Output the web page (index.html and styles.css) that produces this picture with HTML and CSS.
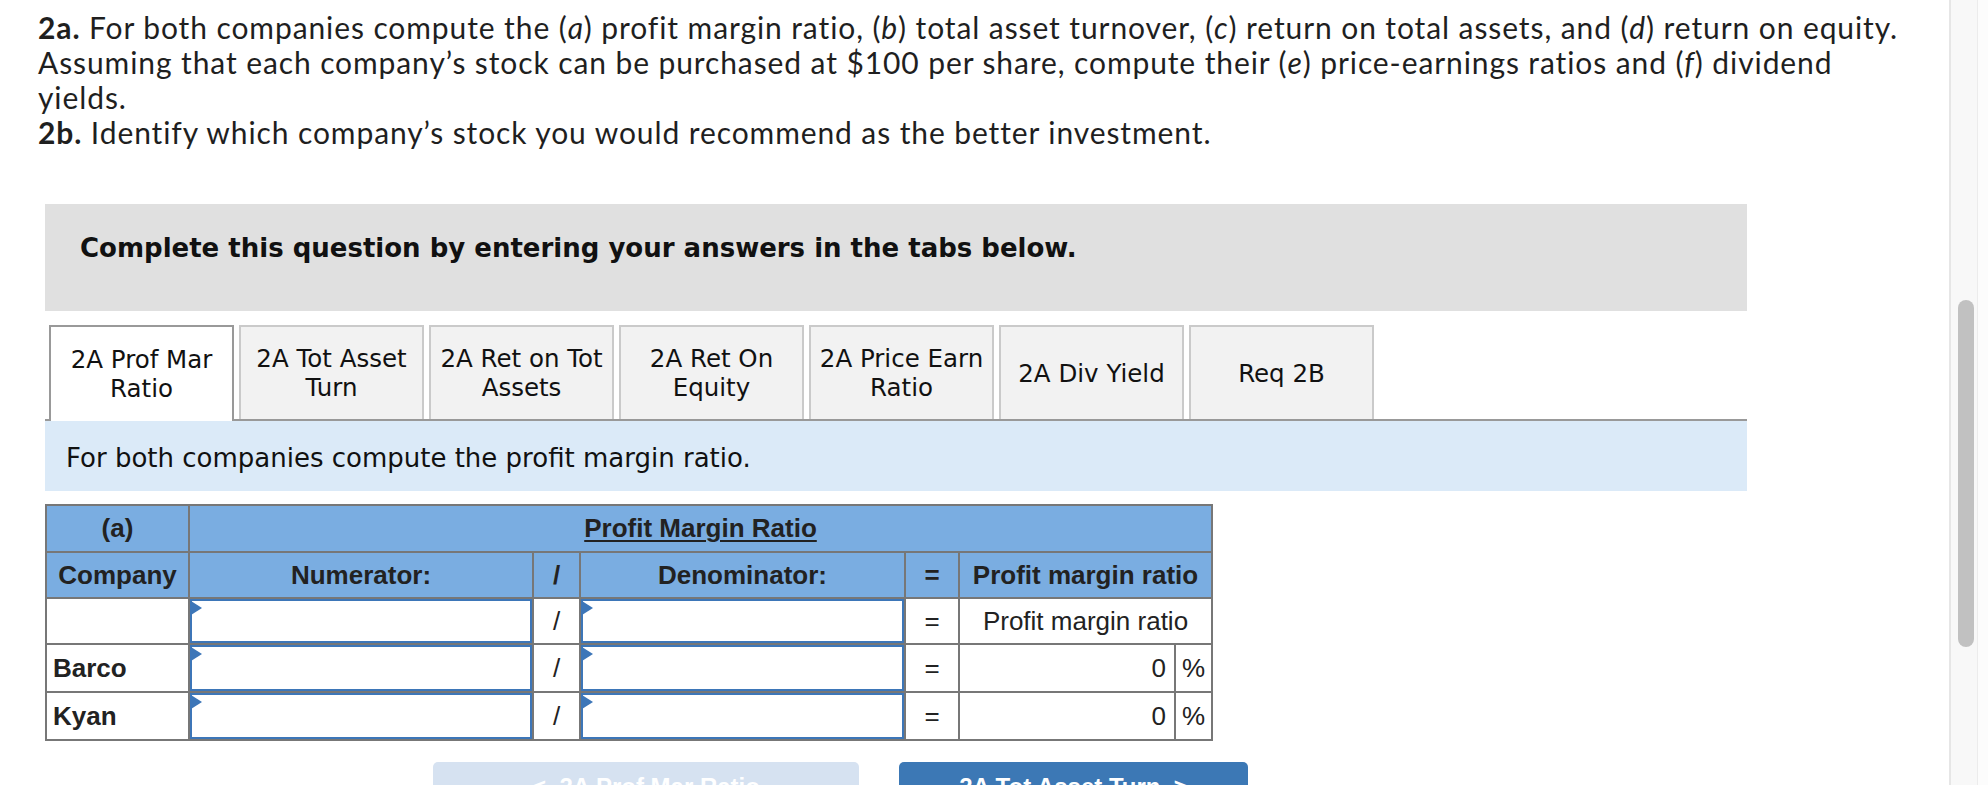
FILE: index.html
```html
<!DOCTYPE html>
<html>
<head>
<meta charset="utf-8">
<link rel="stylesheet" href="styles.css">
</head>
<body>
<div class="page">
  <div class="main">
    <div class="intro">
      <p><b>2a.</b> For both companies compute the (<i>a</i>) profit margin ratio, (<i>b</i>) total asset turnover, (<i>c</i>) return on total assets, and (<i>d</i>) return on equity. Assuming that each company’s stock can be purchased at $100 per share, compute their (<i>e</i>) price-earnings ratios and (<i>f</i>) dividend yields.</p>
      <p><b>2b.</b> Identify which company’s stock you would recommend as the better investment.</p>
    </div>

    <div class="question">
      <div class="notice">Complete this question by entering your answers in the tabs below.</div>

      <div class="tabs">
        <div class="tab active">2A Prof Mar<br>Ratio</div>
        <div class="tab">2A Tot Asset<br>Turn</div>
        <div class="tab">2A Ret on Tot<br>Assets</div>
        <div class="tab">2A Ret On<br>Equity</div>
        <div class="tab">2A Price Earn<br>Ratio</div>
        <div class="tab">2A Div Yield</div>
        <div class="tab">Req 2B</div>
      </div>

      <div class="instruction">For both companies compute the profit margin ratio.</div>

      <table class="grid">
        <colgroup>
          <col class="c-company">
          <col class="c-num">
          <col class="c-op">
          <col class="c-den">
          <col class="c-eq">
          <col class="c-val">
          <col class="c-pct">
        </colgroup>
        <tr class="hdr">
          <th>(a)</th>
          <th colspan="6"><u>Profit Margin Ratio</u></th>
        </tr>
        <tr class="hdr hdr-2">
          <th>Company</th>
          <th>Numerator:</th>
          <th>/</th>
          <th>Denominator:</th>
          <th>=</th>
          <th colspan="2">Profit margin ratio</th>
        </tr>
        <tr class="row">
          <td class="name"></td>
          <td class="in"><div class="field"><input type="text"></div></td>
          <td class="op">/</td>
          <td class="in"><div class="field"><input type="text"></div></td>
          <td class="op">=</td>
          <td class="label" colspan="2">Profit margin ratio</td>
        </tr>
        <tr class="row row-tall">
          <td class="name">Barco</td>
          <td class="in"><div class="field"><input type="text"></div></td>
          <td class="op">/</td>
          <td class="in"><div class="field"><input type="text"></div></td>
          <td class="op">=</td>
          <td class="num">0</td>
          <td class="pct">%</td>
        </tr>
        <tr class="row row-tall">
          <td class="name">Kyan</td>
          <td class="in"><div class="field"><input type="text"></div></td>
          <td class="op">/</td>
          <td class="in"><div class="field"><input type="text"></div></td>
          <td class="op">=</td>
          <td class="num">0</td>
          <td class="pct">%</td>
        </tr>
      </table>

      <div class="nav">
        <button class="btn prev">&lt;&nbsp;&nbsp;2A Prof Mar Ratio</button>
        <button class="btn next">2A Tot Asset Turn&nbsp;&nbsp;&gt;</button>
      </div>
    </div>
  </div>
  <div class="scrollbar"><div class="thumb"></div></div>
  <div class="edge"></div>
</div>
</body>
</html>
```

FILE: styles.css
```css
html, body {
  margin: 0;
  padding: 0;
  background: #fff;
}

.page {
  display: flex;
  height: 785px;
  overflow: hidden;
}

.main {
  flex: 1;
  min-width: 0;
}

.intro {
  padding: 10px 0 0 38px;
  width: 1874px;
  font-family: "Lato", "Open Sans", sans-serif;
  font-size: 30px;
  letter-spacing: 0.9px;
  line-height: 35px;
  color: #1f1f1f;
}

.intro p {
  margin: 0;
}

.intro b {
  font-weight: 700;
}

.question {
  margin: 54px 0 0 45px;
  width: 1702px;
}

.notice {
  box-sizing: border-box;
  height: 107px;
  padding: 29px 0 0 35px;
  background: #e0e0e0;
  font-family: "DejaVu Sans", Verdana, sans-serif;
  font-weight: bold;
  font-size: 26px;
  line-height: 30px;
  color: #111;
}

.tabs {
  display: flex;
  align-items: flex-start;
  gap: 5px;
  margin-top: 14px;
  padding-left: 4px;
  border-bottom: 2px solid #999;
}

.tab {
  box-sizing: border-box;
  width: 185px;
  height: 94px;
  display: flex;
  align-items: center;
  justify-content: center;
  text-align: center;
  border: 2px solid #cacaca;
  border-bottom: none;
  background: #f2f2f2;
  font-family: "DejaVu Sans", Verdana, sans-serif;
  font-size: 24.5px;
  line-height: 29px;
  color: #111;
}

.tab.active {
  height: 96px;
  margin-bottom: -2px;
  background: #fff;
  border-color: #999;
}

.instruction {
  box-sizing: border-box;
  height: 70px;
  padding: 22px 0 0 21px;
  background: #dbeaf8;
  font-family: "DejaVu Sans", Verdana, sans-serif;
  font-size: 26px;
  line-height: 30px;
  color: #111;
}

.grid {
  margin-top: 13px;
  border-collapse: collapse;
  table-layout: fixed;
  width: 1166px;
  font-family: "Liberation Sans", Arial, sans-serif;
  font-size: 26px;
  color: #222;
}

.c-company { width: 143px; }
.c-num { width: 344px; }
.c-op { width: 47px; }
.c-den { width: 325px; }
.c-eq { width: 54px; }
.c-val { width: 216px; }
.c-pct { width: 37px; }

.grid th,
.grid td {
  border: 2px solid #777;
  padding: 0;
  vertical-align: middle;
}

.grid th {
  height: 45px;
  background: #7aade1;
  font-weight: bold;
  text-align: center;
}

.grid .hdr-2 th {
  height: 44px;
}

.grid td {
  height: 44px;
  background: #fff;
}

.grid .row-tall td {
  height: 46px;
}

.grid u {
  text-decoration-thickness: 2px;
  text-underline-offset: 3px;
}

.grid td.name {
  font-weight: bold;
  padding-left: 6px;
}

.grid td.op {
  text-align: center;
}

.grid td.label {
  text-align: center;
}

.grid td.num {
  text-align: right;
  padding-right: 8px;
}

.grid td.pct {
  text-align: center;
}

.field {
  position: relative;
}

.field::before {
  content: "";
  position: absolute;
  left: 1px;
  top: 2px;
  border-style: solid;
  border-width: 7px 0 7px 11px;
  border-color: transparent transparent transparent #3d76b8;
}

.field input {
  box-sizing: border-box;
  display: block;
  width: 100%;
  height: 44px;
  margin: 0;
  border: 2px solid #3d76b8;
  background: #fff;
  outline: none;
}

.row-tall .field input {
  height: 46px;
}

.nav {
  display: flex;
  gap: 40px;
  margin: 21px 0 0 388px;
}

.btn {
  display: flex;
  justify-content: center;
  align-items: flex-start;
  box-sizing: border-box;
  height: 60px;
  padding: 11px 0 0;
  border: none;
  border-radius: 5px;
  font-family: "Liberation Sans", Arial, sans-serif;
  font-size: 24px;
  line-height: 28px;
  font-weight: bold;
  color: #fff;
}

.btn.prev {
  width: 426px;
  background: #d6e2f1;
}

.btn.next {
  width: 349px;
  background: #3c78b5;
}

.scrollbar {
  box-sizing: border-box;
  width: 29px;
  height: 785px;
  padding: 300px 0 0 7px;
  background: #f8f8f8;
  border-left: 2px solid #e6e6e6;
  border-right: 1px solid #ececec;
}

.thumb {
  width: 16px;
  height: 347px;
  border-radius: 8px;
  background: #c1c1c1;
}

.edge {
  width: 10px;
  height: 785px;
  background: #fcfcfc;
}
```
